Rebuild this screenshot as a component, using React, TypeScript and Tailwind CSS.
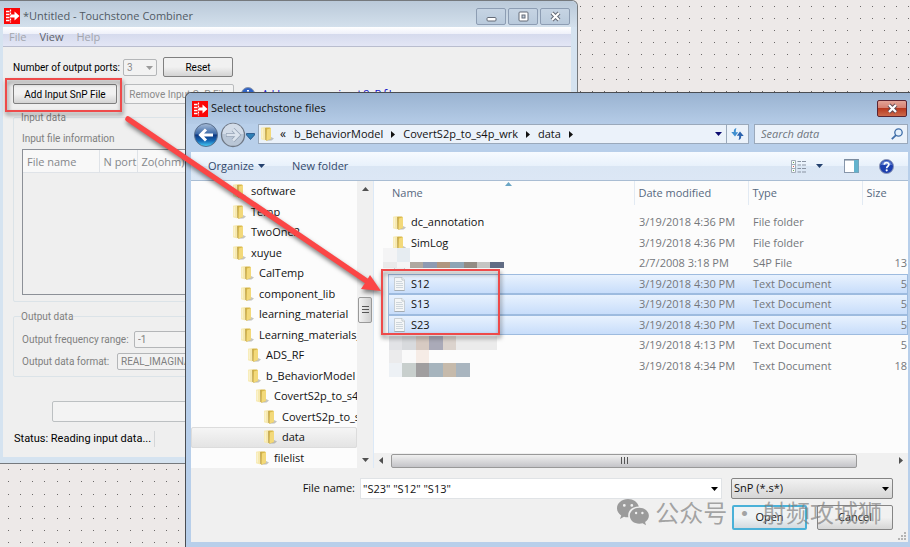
import { Fragment, type ReactNode } from 'react'

interface TreeNode {
  name: string
  level: number
  selected?: boolean
}

interface FileRow {
  name: string
  modified: string
  type: string
  size: string
  icon: 'folder' | 'doc' | 'none'
  selected?: boolean
}

const TREE: TreeNode[] = [
  { name: 'software', level: 0 },
  { name: 'Temp', level: 0 },
  { name: 'TwoOne2', level: 0 },
  { name: 'xuyue', level: 0 },
  { name: 'CalTemp', level: 1 },
  { name: 'component_lib', level: 1 },
  { name: 'learning_material', level: 1 },
  { name: 'Learning_materials_', level: 1 },
  { name: 'ADS_RF', level: 2 },
  { name: 'b_BehaviorModel', level: 2 },
  { name: 'CovertS2p_to_s4p', level: 3 },
  { name: 'CovertS2p_to_s4p', level: 4 },
  { name: 'data', level: 4, selected: true },
  { name: 'filelist', level: 3 },
]

const INDENT = ['pl-[42px]', 'pl-[50px]', 'pl-[57px]', 'pl-[65px]', 'pl-[73px]']

const FILES: FileRow[] = [
  { name: 'dc_annotation', modified: '3/19/2018 4:36 PM', type: 'File folder', size: '', icon: 'folder' },
  { name: 'SimLog', modified: '3/19/2018 4:36 PM', type: 'File folder', size: '', icon: 'folder' },
  { name: '', modified: '2/7/2008 3:18 PM', type: 'S4P File', size: '13', icon: 'doc' },
  { name: 'S12', modified: '3/19/2018 4:30 PM', type: 'Text Document', size: '5', icon: 'doc', selected: true },
  { name: 'S13', modified: '3/19/2018 4:30 PM', type: 'Text Document', size: '5', icon: 'doc', selected: true },
  { name: 'S23', modified: '3/19/2018 4:30 PM', type: 'Text Document', size: '5', icon: 'doc', selected: true },
  { name: '', modified: '3/19/2018 4:13 PM', type: 'Text Document', size: '5', icon: 'none' },
  { name: '', modified: '3/19/2018 4:34 PM', type: 'Text Document', size: '18', icon: 'none' },
]

// x, y, width, height, fill
const MOSAIC: [number, number, number, number, string][] = [
  [0, 0, 14, 14, '#f4f4f5'],
  [14, 0, 13, 14, '#e6ecf1'],
  [0, 14, 14, 6, '#eaeaea'],
  [14, 14, 13, 6, '#f5f5f5'],
  [27, 14, 13, 6, '#b0a8a0'],
  [40, 14, 14, 6, '#8e9ab2'],
  [54, 14, 13, 6, '#b09680'],
  [67, 14, 14, 6, '#8fa5b5'],
  [81, 14, 13, 6, '#938c84'],
  [94, 14, 13, 6, '#c5c5c3'],
  [107, 14, 14, 6, '#616c84'],
  [6, 88, 13, 14, '#e2e3e6'],
  [19, 88, 14, 14, '#d8dadd'],
  [33, 88, 13, 14, '#d7cac2'],
  [46, 88, 14, 14, '#aaaab8'],
  [60, 88, 13, 14, '#dbd3cd'],
  [73, 88, 41, 14, '#ebebeb'],
  [6, 102, 13, 13, '#ebebec'],
  [19, 102, 14, 13, '#fafafa'],
  [33, 102, 13, 13, '#f6ece6'],
  [6, 115, 13, 14, '#edf1f5'],
  [19, 115, 14, 14, '#c8cfcd'],
  [33, 115, 13, 14, '#a09e9f'],
  [46, 115, 14, 14, '#a6b4bd'],
  [60, 115, 13, 14, '#c6baab'],
  [73, 115, 14, 14, '#a9b5bf'],
]

function DotGrid() {
  const xs = [8, 20, 32, 44, 57, 69]
  const ys = [6, 18, 30, 42, 54]
  return (
    <svg className="absolute inset-0 h-full w-full" aria-hidden="true">
      <defs>
        <pattern id="dots" width="73" height="61" patternUnits="userSpaceOnUse">
          {xs.map((x) =>
            ys.map((y) => <rect key={`${x}-${y}`} x={x} y={y} width="1" height="1" fill="#6b6868" />),
          )}
        </pattern>
      </defs>
      <rect width="100%" height="100%" fill="url(#dots)" />
    </svg>
  )
}

function AppLogo() {
  return (
    <svg className="h-4 w-4 shrink-0" viewBox="0 0 16 16" aria-hidden="true">
      <rect width="16" height="16" fill="#fb0606" />
      <path d="M2 3.500h3.500M2 6.500h3.500M2 9.500h3.500M2 12.500h3.500" stroke="#fff" strokeWidth="1.300" />
      <path d="M6.500 1.500v13" stroke="#fff" strokeWidth="1.200" strokeDasharray="2 1" />
      <path d="M7 6.500h3.500V3.500L15.500 8l-5 4.500V9.500H7z" fill="#fff" />
    </svg>
  )
}

function FolderIcon() {
  return (
    <svg className="h-[14px] w-[13px] shrink-0" viewBox="0 0 13 14" aria-hidden="true">
      <path d="M9 9.500l4 2-2.500 2L5 13.800z" fill="#8d8d84" opacity=".5" />
      <path d="M0 .8L4.500 0v13.500L0 12.300z" fill="#f7e9ae" />
      <path d="M4.500.5H9l1 1v10.500L5 13.800z" fill="#d8b84a" />
      <path d="M5.800 2.500L10 1.300v10.500l-4.800 2z" fill="#f3d97a" />
      <path d="M4.800 1v12" stroke="#b39437" strokeWidth=".9" />
      <path d="M1.200 1.500v10" stroke="#fff" strokeWidth=".8" opacity=".7" />
    </svg>
  )
}

function DocIcon() {
  return (
    <svg className="h-[14px] w-[13px] shrink-0" viewBox="0 0 13 14" aria-hidden="true">
      <path d="M1.500.5h7.500l2.500 2.500v10.500h-10z" fill="#f4f6f7" stroke="#c0c7cc" strokeWidth=".8" />
      <path d="M9 .5v2.500h2.500" fill="#fff" stroke="#b4bcc2" strokeWidth=".8" />
      <path d="M3 4.500h6M3 6.500h7M3 8.500h7M3 10.500h7" stroke="#cad2d8" strokeWidth=".9" />
      <path d="M1.500 13.500h10" stroke="#9fa8af" strokeWidth=".9" />
    </svg>
  )
}

function Caret({ className }: { className: string }) {
  return (
    <svg className={`h-1 w-[7px] shrink-0 ${className}`} viewBox="0 0 7 4" aria-hidden="true">
      <path d="M0 0h7L3.500 4z" fill="currentColor" />
    </svg>
  )
}

function RightCaret({ className }: { className: string }) {
  return (
    <svg className={`h-[7px] w-1 shrink-0 ${className}`} viewBox="0 0 4 7" aria-hidden="true">
      <path d="M0 0v7l4-3.500z" fill="currentColor" />
    </svg>
  )
}

function WindowButton({ label, children }: { label: string; children: ReactNode }) {
  return (
    <button
      aria-label={label}
      className="flex h-[17px] w-[30px] items-center justify-center rounded-xs border border-[#8d9db3] bg-gradient-to-b from-[#c6d4e3] to-[#b9cadc]"
    >
      <svg className="h-[11px] w-[13px]" viewBox="0 0 13 11" aria-hidden="true">
        {children}
      </svg>
    </button>
  )
}

function CombinerWindow() {
  return (
    <section className="absolute top-0 left-0 flex h-[464px] w-[578px] flex-col rounded-tr-md border-t border-r border-b border-[#75797d] bg-[#d5e3f0] pr-[6px] pb-[6px] pl-[3px] font-['Roboto',sans-serif] text-[10px] text-black">
      <header className="-mr-[6px] -ml-[3px] flex h-[26px] shrink-0 items-center rounded-tr-md bg-gradient-to-b from-[#bac9d9] to-[#d3e0ec] pt-1 pr-[7px] pl-1">
        <AppLogo />
        <h1 className="ml-[3px] flex-1 font-['Open_Sans',sans-serif] text-[11px] text-[#515a64]">
          *Untitled - Touchstone Combiner
        </h1>
        <div className="flex gap-[2px]">
          <WindowButton label="Minimize">
            <rect x="2" y="6.500" width="9" height="3.500" rx="1" fill="#fff" stroke="#646b77" />
          </WindowButton>
          <WindowButton label="Maximize">
            <rect x="2" y="1" width="9" height="9" rx="1" fill="#fff" stroke="#646b77" />
            <rect x="5" y="4" width="3" height="3" fill="#c0cfdf" stroke="#646b77" />
          </WindowButton>
          <WindowButton label="Close">
            <path d="M3 2l7 7M10 2L3 9" stroke="#646b77" strokeWidth="4" />
            <path d="M3 2l7 7M10 2L3 9" stroke="#fff" strokeWidth="2" />
          </WindowButton>
        </div>
      </header>

      <nav className="flex h-5 shrink-0 items-center gap-[13px] border-b border-[#b9bdce] bg-[linear-gradient(#fff,#eff1fa_35%,#d5daed_36%,#e3e6f5)] pt-[2px] pl-[6px] font-['Open_Sans',sans-serif] text-[11px]">
        <button className="text-[#a2a5ad]">File</button>
        <button className="text-[#5f636c]">View</button>
        <button className="text-[#a2a5ad]">Help</button>
      </nav>

      <div className="flex-1 bg-[#efefef] pt-[10px] pl-[10px]">
        <div className="flex h-5 items-center">
          <label htmlFor="ports">Number of output ports:</label>
          <div className="relative ml-[3px]">
            <select
              id="ports"
              disabled
              className="block h-[17px] w-[34px] appearance-none rounded-xs border border-[#b4b6b8] bg-[#f2f2f2] pl-[3px] text-[#8b8b8b]"
            >
              <option>3</option>
            </select>
            <Caret className="absolute top-[7px] right-1 text-[#9b9b9b]" />
          </div>
          <button className="ml-[6px] h-5 w-[70px] rounded-xs border border-[#7f7f7f] bg-gradient-to-b from-[#f1f1f1] from-50% to-[#d3d3d3]">
            Reset
          </button>
        </div>

        <div className="mt-[7px] flex h-5 items-center">
          <button className="h-5 w-[104px] rounded-xs border border-[#7f7f7f] bg-gradient-to-b from-[#f1f1f1] from-50% to-[#d3d3d3]">
            Add Input SnP File
          </button>
          <button
            disabled
            className="ml-[7px] h-5 w-[110px] rounded-xs border border-[#b9bbbd] bg-[#f3f3f3] whitespace-nowrap text-[#8a8a8a]"
          >
            Remove Input SnP File
          </button>
          <svg className="ml-[7px] h-[14px] w-[14px]" viewBox="0 0 14 14" aria-hidden="true">
            <circle cx="7" cy="7" r="6.500" fill="#2f62c4" stroke="#8c96a8" />
            <path d="M7 3v1.500M7 6v5" stroke="#fff" strokeWidth="2" />
          </svg>
          <a href="#add" className="ml-[7px] text-[#1414c8]">
            Add one or more input SnP files
          </a>
        </div>

        <fieldset className="mt-[6px] mr-3 h-[192px] rounded-xs border border-[#dbe3e8] px-2">
          <legend className="-ml-px text-[#808080]">Input data</legend>
          <p className="mt-[6px] text-[#808080]">Input file information</p>
          <div className="mt-[3px] h-[146px] border border-[#8c9097]">
            <table className="w-full table-fixed font-['Open_Sans',sans-serif] text-[11px] text-[#84878b]">
              <thead>
                <tr className="h-[22px] bg-[#f8f8f8] text-left">
                  <th className="w-[76px] border-r border-b border-[#dfe3e8] p-0 pt-[2px] pl-1 font-normal">
                    File name
                  </th>
                  <th className="w-[38px] overflow-hidden border-r border-b border-[#dfe3e8] p-0 pt-[2px] pl-1 font-normal whitespace-nowrap">
                    N port
                  </th>
                  <th className="border-b border-[#dfe3e8] p-0 pt-[2px] pl-1 font-normal">Zo(ohm)</th>
                </tr>
              </thead>
            </table>
          </div>
        </fieldset>

        <fieldset className="mt-[7px] mr-3 h-[68px] rounded-xs border border-[#dbe3e8] px-2 text-[#808080]">
          <legend className="-ml-px">Output data</legend>
          <div className="mt-[7px] flex h-[17px] items-center">
            <label htmlFor="range" className="w-[112px]">
              Output frequency range:
            </label>
            <input
              id="range"
              disabled
              defaultValue="-1"
              className="h-[17px] w-[140px] rounded-xs border border-[#b4b6b8] bg-[#f2f2f2] px-[3px]"
            />
          </div>
          <div className="mt-[5px] flex h-[17px] items-center">
            <label htmlFor="format" className="w-[95px]">
              Output data format:
            </label>
            <select
              id="format"
              disabled
              className="h-[17px] w-[140px] appearance-none rounded-xs border border-[#b4b6b8] bg-[#f2f2f2] px-[3px]"
            >
              <option>REAL_IMAGINARY</option>
            </select>
          </div>
        </fieldset>

        <div className="mt-6 mr-12 ml-[39px] h-[21px] rounded-xs border border-[#bcc0c2] bg-[#f3f3f3]" />
        <p className="mt-[9px] ml-[1px] inline-block border-r border-[#d4d6d8] pr-[3px] text-[11px] leading-4">
          Status: Reading input data...
        </p>
      </div>
    </section>
  )
}

function AddressBar() {
  const path = ['b_BehaviorModel', 'CovertS2p_to_s4p_wrk', 'data']
  return (
    <div className="flex h-7 shrink-0 items-center pl-[2px]">
      <button aria-label="Back" className="-mt-[7px]">
        <svg className="h-[26px] w-[26px]" viewBox="0 0 26 26" aria-hidden="true">
          <defs>
            <linearGradient id="back" x1="0" y1="0" x2="0" y2="1">
              <stop offset="0" stopColor="#a9bdd8" />
              <stop offset=".45" stopColor="#3d6aa8" />
              <stop offset=".5" stopColor="#0d3680" />
              <stop offset=".75" stopColor="#1668b4" />
              <stop offset="1" stopColor="#48d2fa" />
            </linearGradient>
          </defs>
          <circle cx="13" cy="13" r="11.500" fill="url(#back)" stroke="#5a6f8c" />
          <path d="M20 13H8M13 7.500L7.500 13l5.500 5.500" stroke="#fff" strokeWidth="3" fill="none" />
        </svg>
      </button>
      <button aria-label="Forward" className="-mt-[7px] ml-[1px]">
        <svg className="h-[26px] w-[26px]" viewBox="0 0 26 26" aria-hidden="true">
          <circle cx="13" cy="13" r="11.500" fill="#b9c6d6" stroke="#6f7885" strokeWidth="1.300" />
          <path d="M2.500 12a10.500 10.500 0 0 1 21 0z" fill="#d3dce8" />
          <path d="M6 13h12M13 7.500l5.500 5.500-5.500 5.500" stroke="#93a1b3" strokeWidth="4" fill="none" />
          <path d="M6.500 13h11.500M13 7.500l5.500 5.500-5.500 5.500" stroke="#dbe3ed" strokeWidth="2.600" fill="none" />
        </svg>
      </button>
      <svg className="-mt-1 h-[7px] w-[9px]" viewBox="0 0 9 7" aria-hidden="true">
        <path d="M.5.5h8v1.500l-4 4.500-4-4.500z" fill="#2f7fb6" stroke="#1f4d80" strokeWidth=".8" />
      </svg>
      <div className="-mt-[8px] ml-[3px] flex h-5 flex-1 items-center border border-[#9aa9bb] bg-[#ebf2fa] pl-[2px]">
        <FolderIcon />
        <span className="ml-[6px] text-xs leading-3">«</span>
        {path.map((part) => (
          <Fragment key={part}>
            <button className="mx-[8px]">{part}</button>
            <RightCaret className="text-[#111]" />
          </Fragment>
        ))}
        <span className="flex-1" />
        <Caret className="mr-1 text-[#0c0c70]" />
        <button
          aria-label="Refresh"
          className="flex h-full w-[22px] items-center justify-center border-l border-[#9aa9bb]"
        >
          <svg className="h-3 w-[13px]" viewBox="0 0 13 12" aria-hidden="true">
            <path d="M5.500 0C3.500.3 2.800 1.500 2.800 4H.3L4 8.500 7.200 4.200H4.800C4.800 2.200 5 1 5.500 0z" fill="#3f8fd0" />
            <path d="M7.500 12c2-.3 2.700-1.500 2.700-4h2.500L9 3.500 5.800 7.800h2.400c0 2-.2 3.200-.7 4.200z" fill="#2c63ae" />
          </svg>
        </button>
      </div>
      <label className="-mt-[8px] ml-[5px] flex h-5 w-[154px] items-center border border-[#9aa9bb] bg-[#ebf2fa] pr-1 pl-[6px]">
        <input
          type="text"
          aria-label="Search data"
          placeholder="Search data"
          className="w-0 flex-1 bg-transparent italic outline-none placeholder:text-[#6f757c]"
        />
        <svg className="h-3 w-3" viewBox="0 0 12 12" aria-hidden="true">
          <circle cx="7.500" cy="4.500" r="3.700" fill="#e4f0fb" stroke="#3f6ea8" strokeWidth="1.300" />
          <path d="M5 7.200L.8 11.200" stroke="#3f6ea8" strokeWidth="1.800" />
        </svg>
      </label>
    </div>
  )
}

function Toolbar() {
  return (
    <div className="flex h-[29px] shrink-0 items-center border-b border-[#a9bdd3] bg-[linear-gradient(#f7fbff,#e8f1fb_50%,#dae6f4_51%,#dce7f5)] pr-[14px] pl-[17px] text-[#33496b]">
      <button className="flex items-center gap-1">
        Organize
        <Caret className="text-[#24416e]" />
      </button>
      <button className="ml-[27px]">New folder</button>
      <span className="flex-1" />
      <button aria-label="Change view" className="flex items-center gap-[10px]">
        <svg className="h-[13px] w-[15px]" viewBox="0 0 15 13" aria-hidden="true">
          <path d="M.5.5h4v12h-4zM.5 4.500h4M.5 8.500h4" fill="#f8fafc" stroke="#a3acb8" />
          <path
            d="M6.500 1.500H10M11 1.500h4M6.500 5H10M11 5h4M6.500 8.500H10M11 8.500h4M6.500 12H10M11 12h4"
            stroke="#8993a2"
          />
          <path d="M2 2.500h1M2 10.500h1" stroke="#6ba35a" />
          <path d="M2 6.500h1" stroke="#d55" />
        </svg>
        <Caret className="text-[#24416e]" />
      </button>
      <button aria-label="Preview pane" className="ml-[21px]">
        <svg className="h-[14px] w-[15px]" viewBox="0 0 15 14" aria-hidden="true">
          <rect x=".5" y=".5" width="14" height="13" fill="#fff" stroke="#8796aa" />
          <path d="M.5 1h14" stroke="#6f8093" />
          <rect x="10" y="1" width="4.500" height="12.500" fill="#63b3cd" />
        </svg>
      </button>
      <button aria-label="Help" className="ml-5">
        <svg className="h-[15px] w-[15px]" viewBox="0 0 15 15" aria-hidden="true">
          <circle cx="7.500" cy="7.500" r="7" fill="#1d3fae" stroke="#8d97b5" />
          <path d="M2 6a5.700 5.700 0 0 1 11 0z" fill="#5d7bd0" />
          <path d="M5.300 5.800c0-3 4.600-2.900 4.600-.2 0 1.800-2.200 1.600-2.200 3.600" stroke="#fff" strokeWidth="1.700" fill="none" />
          <circle cx="7.700" cy="11.300" r="1.100" fill="#fff" />
        </svg>
      </button>
    </div>
  )
}

function FolderTree() {
  return (
    <div className="flex w-[183px] shrink-0 border-r border-[#dce9f7]">
      <ul className="flex min-w-0 flex-1 flex-col overflow-hidden">
        {TREE.map((node, i) => (
          <li
            key={i}
            className={`flex flex-1 items-center gap-[5px] whitespace-nowrap ${INDENT[node.level]} ${
              node.selected
                ? 'rounded-xs bg-gradient-to-b from-[#f6f6f6] to-[#e3e3e3] outline-1 -outline-offset-1 outline-[#dcdcdc]'
                : ''
            }`}
          >
            <FolderIcon />
            {node.name}
          </li>
        ))}
      </ul>
      <div className="flex w-4 shrink-0 flex-col items-center bg-[#f0f0f0] py-[6px]">
        <Caret className="rotate-180 text-[#505050]" />
        <span className="flex-[106]" />
        <div className="flex h-[26px] w-[14px] flex-col items-center justify-center gap-[2px] rounded-xs border border-[#999] bg-gradient-to-r from-[#f2f2f2] to-[#cfcfcf]">
          <span className="h-px w-[7px] bg-[#555]" />
          <span className="h-px w-[7px] bg-[#555]" />
          <span className="h-px w-[7px] bg-[#555]" />
        </div>
        <span className="flex-[136]" />
        <Caret className="text-[#505050]" />
      </div>
    </div>
  )
}

function FileList() {
  const divider = 'border-l border-[#e2eaf3] pl-1'
  return (
    <div className="relative flex min-w-0 flex-1 flex-col">
      <div className="flex-1 overflow-hidden pl-[14px]">
        <table className="w-full table-fixed border-collapse text-[#74777b]">
          <thead>
            <tr className="h-6 text-left text-[#57697f]">
              <th className="pl-1 font-normal">Name</th>
              <th className={`w-[114px] font-normal ${divider}`}>Date modified</th>
              <th className={`w-[114px] font-normal ${divider}`}>Type</th>
              <th className={`w-[46px] font-normal ${divider}`}>Size</th>
            </tr>
            <tr className="h-[7px]" />
          </thead>
          <tbody>
            {FILES.map((file, i) => (
              <tr
                key={i}
                className={`odd:h-[21px] even:h-5 ${
                  file.selected
                    ? 'bg-gradient-to-b from-[#eaf3fe] to-[#c6dcfa] outline-1 -outline-offset-1 outline-[#9dbbdf]'
                    : ''
                }`}
              >
                <td className="p-0 pl-[5px] text-[#111]">
                  <div className="flex items-center gap-[5px]">
                    {file.icon === 'folder' && <FolderIcon />}
                    {file.icon === 'doc' && <DocIcon />}
                    {file.name}
                  </div>
                </td>
                <td className="p-0 pl-[5px]">{file.modified}</td>
                <td className="p-0 pl-[5px]">{file.type}</td>
                <td className="p-0 pr-px text-right">{file.size}</td>
              </tr>
            ))}
          </tbody>
        </table>
      </div>

      <svg className="absolute top-[1px] left-[131px] h-1 w-[7px]" viewBox="0 0 7 4" aria-hidden="true">
        <path d="M3.500 0L7 4H0z" fill="#6aa5c4" />
      </svg>
      <svg className="absolute top-[67px] left-[9px] h-[130px] w-[122px]" viewBox="0 0 122 130" aria-hidden="true">
        {MOSAIC.map(([x, y, w, h, fill], i) => (
          <rect key={i} x={x} y={y} width={w} height={h} fill={fill} />
        ))}
      </svg>

      <div className="flex h-[15px] shrink-0 items-center bg-[#f0f0f0] px-[5px]">
        <svg className="h-[7px] w-1" viewBox="0 0 4 7" aria-hidden="true">
          <path d="M4 0v7L0 3.500z" fill="#505050" />
        </svg>
        <div className="ml-2 flex h-[14px] flex-1 items-center justify-center gap-[2px] rounded-xs border border-[#999] bg-gradient-to-b from-[#f0f0f0] to-[#c4c4c8]">
          <span className="h-[7px] w-px bg-[#555]" />
          <span className="h-[7px] w-px bg-[#555]" />
          <span className="h-[7px] w-px bg-[#555]" />
        </div>
        <span className="w-[42px]" />
        <RightCaret className="text-[#505050]" />
      </div>
    </div>
  )
}

function DialogFooter() {
  return (
    <footer className="relative flex shrink-0 flex-col items-end bg-[#f0f0f0] pt-[10px] pr-[15px] pb-3">
      <div className="flex w-full items-center">
        <label htmlFor="filename" className="w-[164px] text-right">
          File name:
        </label>
        <div className="relative ml-[5px] flex-1">
          <input
            id="filename"
            defaultValue={'"S23" "S12" "S13"'}
            className="block h-[21px] w-full border border-[#e0e3e6] bg-white px-[2px]"
          />
          <Caret className="absolute top-[9px] right-1 text-black" />
        </div>
        <div className="relative ml-[9px]">
          <select
            aria-label="File type"
            className="block h-[21px] w-[162px] appearance-none rounded-xs border border-[#858585] bg-gradient-to-b from-[#f2f2f2] to-[#d6d6d6] pl-[2px]"
          >
            <option>SnP (*.s*)</option>
          </select>
          <Caret className="absolute top-[9px] right-1 text-black" />
        </div>
      </div>
      <div className="mt-[6px] flex gap-[10px]">
        <button className="h-[25px] w-[75px] rounded-xs border-2 border-[#4ab1d8] bg-gradient-to-b from-[#eff3f5] from-50% to-[#d3dbe0]">
          Open
        </button>
        <button className="h-[25px] w-[76px] rounded-xs border border-[#858585] bg-gradient-to-b from-[#f1f1f1] from-50% to-[#d6d6d6]">
          Cancel
        </button>
      </div>
      <svg className="absolute right-[1px] bottom-[1px] h-[9px] w-[9px]" viewBox="0 0 9 9" aria-hidden="true">
        <path d="M6 0h2v2H6zM3 3h2v2H3zM6 3h2v2H6zM0 6h2v2H0zM3 6h2v2H3zM6 6h2v2H6z" fill="#b4b4b4" />
      </svg>
      <div className="pointer-events-none absolute right-[26px] bottom-4 flex items-center gap-[6px] text-[#808080]/70">
        <svg className="h-[27px] w-8" viewBox="0 0 32 27" aria-hidden="true">
          <path
            fillRule="evenodd"
            fill="#9b9b9b"
            d="M11 0C5 0 0 4 0 9.200c0 3 1.600 5.500 4.200 7.200L3 20l4-2.200c1.600.4 2.800.6 4.400.5C10 12 15 7.500 21.800 7.500 20.800 3 16.200 0 11 0zM7.300 5a1.400 1.400 0 1 1 0 2.800 1.400 1.400 0 0 1 0-2.800zm7.500 0a1.400 1.400 0 1 1 0 2.800 1.400 1.400 0 0 1 0-2.800z"
          />
          <path
            fillRule="evenodd"
            fill="#9b9b9b"
            d="M22.300 8.800c-5.300 0-9.500 3.600-9.500 8s4.200 8 9.500 8c1.200 0 2.300-.2 3.300-.5l3.400 2-.9-3.200c2.300-1.500 3.800-3.700 3.800-6.300 0-4.400-4.300-8-9.600-8zm-3.200 4a1.200 1.200 0 1 1 0 2.400 1.200 1.200 0 0 1 0-2.400zm6.300 0a1.200 1.200 0 1 1 0 2.400 1.200 1.200 0 0 1 0-2.400z"
          />
        </svg>
        <span className="font-['Noto_Sans_CJK_SC',sans-serif] text-2xl leading-7 whitespace-nowrap">
          公众号 · 射频攻城狮
        </span>
      </div>
    </footer>
  )
}

function FileDialog() {
  return (
    <section
      role="dialog"
      aria-label="Select touchstone files"
      className="absolute top-[92px] right-0 bottom-0 left-[185px] flex flex-col rounded-tl-md border-t border-l border-[#4a4d52] bg-[#b8cfea] pr-[2px] pb-[5px] pl-[5px] font-['Open_Sans',sans-serif] text-[11px] text-[#111]"
    >
      <header className="-mr-[2px] -ml-[5px] flex h-[31px] shrink-0 items-center rounded-tl-md bg-gradient-to-b from-[#9ab3d1] to-[#b5cce7] pr-[3px] pl-[6px]">
        <AppLogo />
        <h2 className="ml-[3px] flex-1">Select touchstone files</h2>
        <button
          aria-label="Close"
          className="flex h-[17px] w-[30px] items-center justify-center rounded-xs border border-[#5a2432] bg-[linear-gradient(#e3a497,#d57f70_48%,#b8391f_50%,#cc6a4c)]"
        >
          <svg className="h-[11px] w-[13px]" viewBox="0 0 13 11" aria-hidden="true">
            <path d="M3 2l7 7M10 2L3 9" stroke="#5c4650" strokeWidth="4" />
            <path d="M3 2l7 7M10 2L3 9" stroke="#fff" strokeWidth="2.300" />
          </svg>
        </button>
      </header>
      <AddressBar />
      <Toolbar />
      <div className="flex min-h-0 flex-1 bg-[#fcfcfc]">
        <FolderTree />
        <FileList />
      </div>
      <DialogFooter />
    </section>
  )
}

function Annotations() {
  return (
    <svg
      className="pointer-events-none absolute top-0 left-0 h-[360px] w-[520px] drop-shadow-[1px_3px_2px_rgba(0,0,0,0.5)]"
      viewBox="0 0 520 360"
      aria-hidden="true"
    >
      <rect x="6" y="79" width="115" height="32" fill="none" stroke="#ee4a4a" strokeWidth="2" />
      <rect x="382" y="270" width="117" height="64" fill="none" stroke="#ee4a4a" strokeWidth="2" />
      <path d="M128 119L368 282" stroke="#fb4646" strokeWidth="5.500" strokeLinecap="round" />
      <path d="M381 291l-11-16-3 5-6 9z" fill="#fb4646" />
    </svg>
  )
}

export default function App() {
  return (
    <main className="relative h-screen min-h-[500px] overflow-hidden bg-[#ede9e8]">
      <DotGrid />
      <CombinerWindow />
      <FileDialog />
      <Annotations />
    </main>
  )
}
